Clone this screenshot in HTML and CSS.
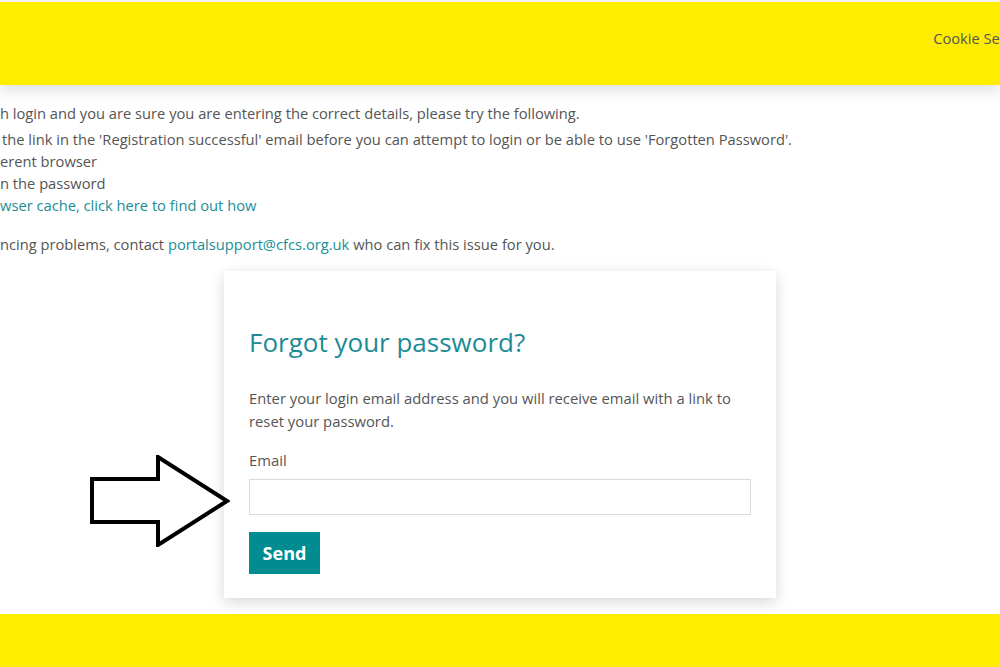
FILE: index.html
```html
<!DOCTYPE html>
<html lang="en">
<head>
  <meta charset="UTF-8" />
  <title>Forgot your password?</title>
  <link rel="stylesheet" href="styles.css">
</head>
<body>
  <header class="topbar">
    <a href="#" class="cookie-link">Cookie Settings</a>
  </header>

  <main class="content">
    <p class="intro">h login and you are sure you are entering the correct details, please try the following.</p>
    <ul class="tips">
      <li class="first">the link in the 'Registration successful' email before you can attempt to login or be able to use 'Forgotten Password'.</li>
      <li>erent browser</li>
      <li>n the password</li>
      <li><a href="#">wser cache, click here to find out how</a></li>
    </ul>
    <p class="contact">ncing problems, contact <a href="#">portalsupport@cfcs.org.uk</a> who can fix this issue for you.</p>

    <div class="card-wrap">
      <svg class="arrow" width="140" height="92" viewBox="0 0 140 92">
        <polygon points="2,24 68,24 68,2 137,46 68,90 68,67 2,67" fill="#fff" stroke="#000" stroke-width="4" stroke-linejoin="miter" />
      </svg>
      <div class="card">
        <h2>Forgot your password?</h2>
        <p>Enter your login email address and you will receive email with a link to reset your password.</p>
        <label for="email">Email</label>
        <input type="email" id="email" />
        <button class="send">Send</button>
      </div>
    </div>
  </main>

  <footer class="bottombar"></footer>
</body>
</html>
```

FILE: styles.css
```css
* {
  margin: 0;
  padding: 0;
  box-sizing: border-box;
}

body {
  font-family: 'Open Sans', 'Liberation Sans', sans-serif;
  font-size: 14.7px;
  color: #555;
  background: #fff;
  overflow: hidden;
  width: 1000px;
  height: 667px;
}

a {
  color: #1b8e96;
  text-decoration: none;
}

.topbar {
  height: 85px;
  border-top: 2px solid #f1f1f1;
  background: #ffed00;
  display: flex;
  justify-content: flex-end;
  align-items: center;
  overflow: hidden;
  box-shadow: 0 6px 14px rgba(0, 0, 0, 0.12);
  position: relative;
  z-index: 2;
}

.cookie-link {
  color: #555;
  white-space: nowrap;
  margin-right: -38px;
  padding-bottom: 11px;
}

.content {
  padding-top: 17px;
  line-height: 22px;
}

.tips {
  list-style: none;
  margin-top: 4px;
}

.tips .first {
  padding-left: 2px;
}

.contact {
  margin-top: 17px;
}

.card-wrap {
  position: relative;
  margin: 16px 0 0 224px;
  width: 552px;
}

.card {
  background: #fff;
  padding: 25px 25px 24px;
  box-shadow: 0 4px 14px rgba(0, 0, 0, 0.16);
  display: flex;
  flex-direction: column;
  align-items: flex-start;
  font-size: 14.8px;
}

.card h2 {
  margin-top: 30px;
  font-size: 26px;
  font-weight: 400;
  line-height: 32px;
  color: #1c8b95;
}

.card p {
  margin-top: 29px;
  line-height: 23px;
}

.card label {
  margin-top: 16px;
  line-height: 22px;
}

.card input {
  margin-top: 8px;
  width: 100%;
  height: 36px;
  border: 1px solid #d9dcde;
  padding: 0 10px;
  font-family: inherit;
  font-size: 14px;
  outline: none;
}

.send {
  margin-top: 17px;
  width: 71px;
  height: 42px;
  background: #008c91;
  color: #fff;
  border: none;
  font-family: inherit;
  font-size: 18px;
  font-weight: 700;
  cursor: pointer;
}

.arrow {
  position: absolute;
  left: -134px;
  top: 184px;
  z-index: 3;
}

.bottombar {
  margin-top: 16px;
  height: 60px;
  background: #ffed00;
}
```
